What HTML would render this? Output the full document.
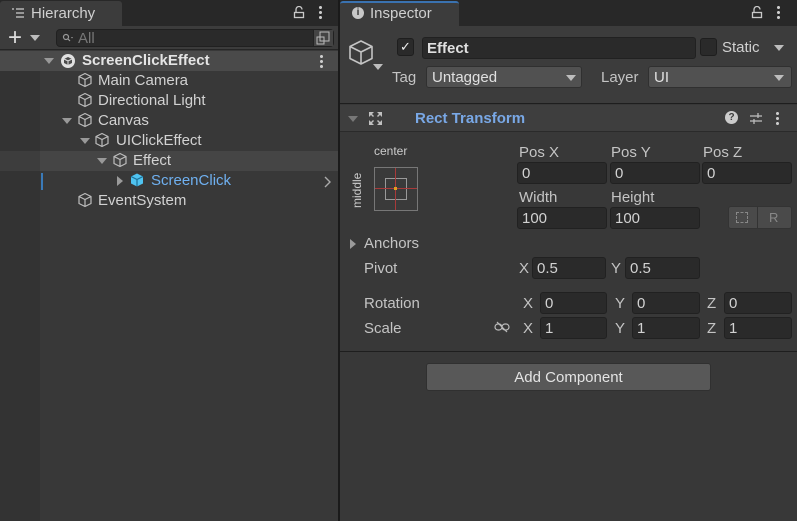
<!DOCTYPE html>
<html><head><style>
*{margin:0;padding:0;box-sizing:border-box}
body{width:797px;height:521px;background:#383838;font-family:"Liberation Sans",sans-serif;font-size:15px;color:#d2d2d2;position:relative;overflow:hidden}
.a{position:absolute;white-space:nowrap;line-height:20px}
.f{position:absolute;background:#2a2a2a;border:1px solid #212121;border-radius:3px;height:22px;padding-left:4px;line-height:22px;color:#d2d2d2}
.dd{position:absolute;background:#515151;border:1px solid #303030;border-radius:3px;height:22px;padding-left:5px;line-height:21px;color:#e0e0e0}
.tri{position:absolute;width:0;height:0;border-left:5px solid transparent;border-right:5px solid transparent;border-top:6px solid #bdbdbd}
.trir{position:absolute;width:0;height:0;border-top:5px solid transparent;border-bottom:5px solid transparent;border-left:6px solid #9a9a9a}
.lbl{color:#c4c4c4}
</style></head><body>
<div class="a" style="left:0;top:0;width:797px;height:26px;background:#282828"></div>
<div class="a" style="left:0;top:1px;width:122px;height:25px;background:#3c3c3c;border-radius:3px 3px 0 0"></div>
<div class="a" style="left:340px;top:1px;width:119px;height:25px;background:#3c3c3c;border-radius:3px 3px 0 0;border-top:2px solid #3a72b0"></div>
<svg class="a" style="left:11px;top:7px" width="14" height="12"><g stroke="#c8c8c8" stroke-width="1.3"><line x1="1" y1="2" x2="3" y2="2"/><line x1="5" y1="2" x2="13" y2="2"/><line x1="5" y1="6" x2="13" y2="6"/><line x1="5" y1="10" x2="13" y2="10"/></g></svg>
<div class="a" style="left:31px;top:4px;color:#d0d0d0">Hierarchy</div>
<div class="a" style="left:352px;top:7px;width:12px;height:12px;border-radius:50%;background:#c8c8c8;color:#333;font-size:10px;font-weight:bold;text-align:center;line-height:12px">i</div>
<div class="a" style="left:370px;top:4px;color:#d0d0d0">Inspector</div>
<svg class="a" style="left:293px;top:6px" width="12" height="13"><path d="M3 6V3.5a3 3 0 0 1 6 0" fill="none" stroke="#c8c8c8" stroke-width="1.3"/><rect x="1.5" y="6.5" width="9" height="5" fill="none" stroke="#c8c8c8" stroke-width="1.3"/></svg>
<svg class="a" style="left:751px;top:6px" width="12" height="13"><path d="M3 6V3.5a3 3 0 0 1 6 0" fill="none" stroke="#c8c8c8" stroke-width="1.3"/><rect x="1.5" y="6.5" width="9" height="5" fill="none" stroke="#c8c8c8" stroke-width="1.3"/></svg>
<div class="a" style="left:319px;top:5px;width:3px;height:14px;background:radial-gradient(circle,#ccc 1.4px,transparent 1.6px) 0 0/3px 5px"></div>
<div class="a" style="left:777px;top:5px;width:3px;height:14px;background:radial-gradient(circle,#ccc 1.4px,transparent 1.6px) 0 0/3px 5px"></div>
<div class="a" style="left:338px;top:0;width:2px;height:521px;background:#1a1a1a"></div>
<div class="a" style="left:0;top:26px;width:338px;height:24px;background:#3c3c3c;border-bottom:1px solid #252525"></div>
<div class="a" style="left:8px;top:26px;font-size:24px;color:#ddd;line-height:24px">+</div>
<div class="tri" style="left:30px;top:35px"></div>
<div class="a" style="left:56px;top:29px;width:278px;height:18px;background:#2a2a2a;border:1px solid #202020;border-radius:4px"></div>
<svg class="a" style="left:62px;top:33px" width="12" height="10"><circle cx="4" cy="4" r="2.5" fill="none" stroke="#999" stroke-width="1.2"/><line x1="6" y1="6" x2="8" y2="8" stroke="#999" stroke-width="1.2"/><path d="M9 4l2 0l-1 1.5z" fill="#999"/></svg>
<div class="a" style="left:78px;top:29px;color:#777">All</div>
<div class="a" style="left:313px;top:30px;width:20px;height:16px;background:#444;border-left:1px solid #222"></div>
<svg class="a" style="left:316px;top:31px" width="14" height="14"><rect x="1" y="6" width="7" height="7" fill="none" stroke="#bbb"/><rect x="4" y="1" width="9" height="9" fill="none" stroke="#bbb"/></svg>
<div class="a" style="left:0;top:51px;width:338px;height:20px;background:#4a4a4a"></div>
<div class="a" style="left:0;top:71px;width:40px;height:450px;background:#333"></div>
<div class="a" style="left:40px;top:151px;width:298px;height:20px;background:#454545"></div>
<div class="a" style="left:0;top:151px;width:40px;height:20px;background:#3d3d3d"></div>
<div class="a" style="left:41px;top:173px;width:2px;height:17px;background:#3a7ab8"></div>
<div class="tri" style="left:44px;top:58px;border-top-color:#999"></div>
<svg class="a" style="left:59px;top:52px" width="18" height="18"><circle cx="9" cy="9" r="7" fill="#e0e0e0"/><path d="M5 7l4-2 4 2v4l-4 2-4-2z" fill="#4a4a4a"/><path d="M9 9v4M5 7l4 2 4-2" stroke="#e0e0e0" fill="none"/></svg>
<div class="a" style="left:82px;top:51px;font-weight:bold;color:#e4e4e4">ScreenClickEffect</div>
<div class="a" style="left:320px;top:54px;width:3px;height:14px;background:radial-gradient(circle,#ccc 1.4px,transparent 1.6px) 0 0/3px 5px"></div>
<svg width="0" height="0" style="position:absolute"><defs><g id="cube"><path d="M8 1.5l6 3v7l-6 3-6-3v-7z M2 4.5l6 3 6-3 M8 7.5v7" fill="none" stroke="#bdbdbd" stroke-width="1.2" stroke-linejoin="round"/></g></defs></svg>
<svg class="a" style="left:77px;top:72px" width="16" height="17"><use href="#cube"/></svg>
<div class="a" style="left:98px;top:71px">Main Camera</div>
<svg class="a" style="left:77px;top:92px" width="16" height="17"><use href="#cube"/></svg>
<div class="a" style="left:98px;top:91px">Directional Light</div>
<div class="tri" style="left:62px;top:118px;border-top-color:#999"></div>
<svg class="a" style="left:77px;top:112px" width="16" height="17"><use href="#cube"/></svg>
<div class="a" style="left:98px;top:111px">Canvas</div>
<div class="tri" style="left:80px;top:138px;border-top-color:#999"></div>
<svg class="a" style="left:94px;top:132px" width="16" height="17"><use href="#cube"/></svg>
<div class="a" style="left:116px;top:131px">UIClickEffect</div>
<div class="tri" style="left:97px;top:158px;border-top-color:#999"></div>
<svg class="a" style="left:112px;top:152px" width="16" height="17"><use href="#cube"/></svg>
<div class="a" style="left:133px;top:151px">Effect</div>
<div class="trir" style="left:117px;top:176px"></div>
<svg class="a" style="left:129px;top:172px" width="16" height="17"><path d="M8 1.5l6 3v7l-6 3-6-3v-7z" fill="#4fc3f0"/><path d="M2 4.5l6 3 6-3 M8 7.5v7" fill="none" stroke="#1d6f96" stroke-width="1.2"/></svg>
<div class="a" style="left:151px;top:171px;color:#6fb0f0">ScreenClick</div>
<svg class="a" style="left:323px;top:176px" width="8" height="12"><path d="M2 1l5 5-5 5" fill="none" stroke="#aaa" stroke-width="1.4"/></svg>
<svg class="a" style="left:77px;top:192px" width="16" height="17"><use href="#cube"/></svg>
<div class="a" style="left:98px;top:191px">EventSystem</div>
<div class="a" style="left:340px;top:26px;width:457px;height:78px;background:#3c3c3c;border-bottom:1px solid #1e1e1e"></div>
<svg class="a" style="left:347px;top:38px" width="30" height="30"><path d="M14 3l11 5.5v12L14 26 3 20.5v-12z M3 8.5l11 5.5 11-5.5 M14 14v12" fill="none" stroke="#c4c4c4" stroke-width="1.6" stroke-linejoin="round"/></svg>
<div class="tri" style="left:373px;top:64px"></div>
<div class="a" style="left:397px;top:38px;width:17px;height:18px;background:#2a2a2a;border:1px solid #1e1e1e;border-radius:3px;color:#eee;font-size:13px;text-align:center;line-height:16px">&#10003;</div>
<div class="f" style="left:422px;top:37px;width:274px;font-weight:bold;color:#e0e0e0;padding-left:4px">Effect</div>
<div class="a" style="left:700px;top:38px;width:17px;height:18px;background:#2a2a2a;border:1px solid #1e1e1e;border-radius:3px"></div>
<div class="a" style="left:722px;top:38px">Static</div>
<div class="tri" style="left:774px;top:45px"></div>
<div class="a lbl" style="left:392px;top:68px">Tag</div>
<div class="dd" style="left:426px;top:66px;width:156px">Untagged</div>
<div class="tri" style="left:566px;top:75px"></div>
<div class="a lbl" style="left:601px;top:68px">Layer</div>
<div class="dd" style="left:648px;top:66px;width:144px">UI</div>
<div class="tri" style="left:774px;top:75px"></div>
<div class="a" style="left:340px;top:105px;width:457px;height:27px;background:#3e3e3e;border-bottom:1px solid #2a2a2a"></div>
<div class="tri" style="left:348px;top:116px;border-top-color:#777"></div>
<svg class="a" style="left:368px;top:111px" width="15" height="15"><g fill="#c0c0c0"><path d="M1 1h5l-2 2 2 2-1 1-2-2-2 2z"/><path d="M14 1v5l-2-2-2 2-1-1 2-2-2-2z"/><path d="M1 14v-5l2 2 2-2 1 1-2 2 2 2z"/><path d="M14 14h-5l2-2-2-2 1-1 2 2 2-2z"/></g></svg>
<div class="a" style="left:415px;top:109px;font-weight:bold;color:#79a8e6">Rect Transform</div>
<div class="a" style="left:725px;top:111px;width:13px;height:13px;border-radius:50%;background:#ccc;color:#3e3e3e;font-size:10px;font-weight:bold;text-align:center;line-height:13px">?</div>
<svg class="a" style="left:749px;top:111px" width="14" height="14"><g stroke="#bbb" stroke-width="1.3"><line x1="1" y1="5" x2="13" y2="5"/><line x1="1" y1="10" x2="13" y2="10"/><line x1="9" y1="2" x2="9" y2="7"/><line x1="5" y1="8" x2="5" y2="13"/></g></svg>
<div class="a" style="left:776px;top:111px;width:3px;height:14px;background:radial-gradient(circle,#ccc 1.4px,transparent 1.6px) 0 0/3px 5px"></div>
<div class="a" style="left:374px;top:141px;font-size:12px;color:#ccc">center</div>
<div class="a" style="left:347px;top:208px;font-size:12px;color:#ccc;transform:rotate(-90deg);transform-origin:0 0">middle</div>
<div class="a" style="left:374px;top:167px;width:44px;height:44px;border:1px solid #777;background:#3a3a3a"></div>
<div class="a" style="left:385px;top:178px;width:22px;height:22px;border:1px solid #999"></div>
<div class="a" style="left:395px;top:168px;width:1px;height:42px;background:#a83a3a"></div>
<div class="a" style="left:375px;top:188px;width:42px;height:1px;background:#a83a3a"></div>
<div class="a" style="left:394px;top:187px;width:3px;height:3px;background:#e0a020"></div>
<div class="a lbl" style="left:519px;top:143px">Pos X</div>
<div class="a lbl" style="left:611px;top:143px">Pos Y</div>
<div class="a lbl" style="left:703px;top:143px">Pos Z</div>
<div class="f" style="left:517px;top:162px;width:90px">0</div>
<div class="f" style="left:610px;top:162px;width:90px">0</div>
<div class="f" style="left:702px;top:162px;width:90px">0</div>
<div class="a lbl" style="left:519px;top:188px">Width</div>
<div class="a lbl" style="left:611px;top:188px">Height</div>
<div class="f" style="left:517px;top:207px;width:90px">100</div>
<div class="f" style="left:610px;top:207px;width:90px">100</div>
<div class="a" style="left:728px;top:206px;width:64px;height:23px;background:#4a4a4a;border:1px solid #333;border-radius:3px"></div>
<div class="a" style="left:757px;top:206px;width:1px;height:23px;background:#333"></div>
<div class="a" style="left:736px;top:212px;width:12px;height:11px;border:1px dashed #888"></div>
<div class="a" style="left:769px;top:208px;color:#888;font-size:13px">R</div>
<div class="trir" style="left:350px;top:239px"></div>
<div class="a lbl" style="left:364px;top:234px">Anchors</div>
<div class="a lbl" style="left:364px;top:259px">Pivot</div>
<div class="a lbl" style="left:519px;top:259px">X</div>
<div class="f" style="left:532px;top:257px;width:74px">0.5</div>
<div class="a lbl" style="left:611px;top:259px">Y</div>
<div class="f" style="left:625px;top:257px;width:75px">0.5</div>
<div class="a lbl" style="left:364px;top:294px">Rotation</div>
<div class="a lbl" style="left:523px;top:294px">X</div>
<div class="f" style="left:540px;top:292px;width:67px">0</div>
<div class="a lbl" style="left:615px;top:294px">Y</div>
<div class="f" style="left:632px;top:292px;width:68px">0</div>
<div class="a lbl" style="left:707px;top:294px">Z</div>
<div class="f" style="left:724px;top:292px;width:68px">0</div>
<div class="a lbl" style="left:364px;top:319px">Scale</div>
<svg class="a" style="left:494px;top:321px" width="16" height="12"><g fill="none" stroke="#bbb" stroke-width="1.2"><rect x="1" y="3" width="7" height="6" rx="3"/><rect x="8" y="3" width="7" height="6" rx="3"/><line x1="3" y1="1" x2="13" y2="11"/></g></svg>
<div class="a lbl" style="left:523px;top:319px">X</div>
<div class="f" style="left:540px;top:317px;width:67px">1</div>
<div class="a lbl" style="left:615px;top:319px">Y</div>
<div class="f" style="left:632px;top:317px;width:68px">1</div>
<div class="a lbl" style="left:707px;top:319px">Z</div>
<div class="f" style="left:724px;top:317px;width:68px">1</div>
<div class="a" style="left:340px;top:351px;width:457px;height:1px;background:#1e1e1e"></div>
<div class="a" style="left:426px;top:363px;width:285px;height:28px;background:#585858;border:1px solid #303030;border-radius:3px;text-align:center;line-height:28px;color:#e4e4e4">Add Component</div>
</body></html>
